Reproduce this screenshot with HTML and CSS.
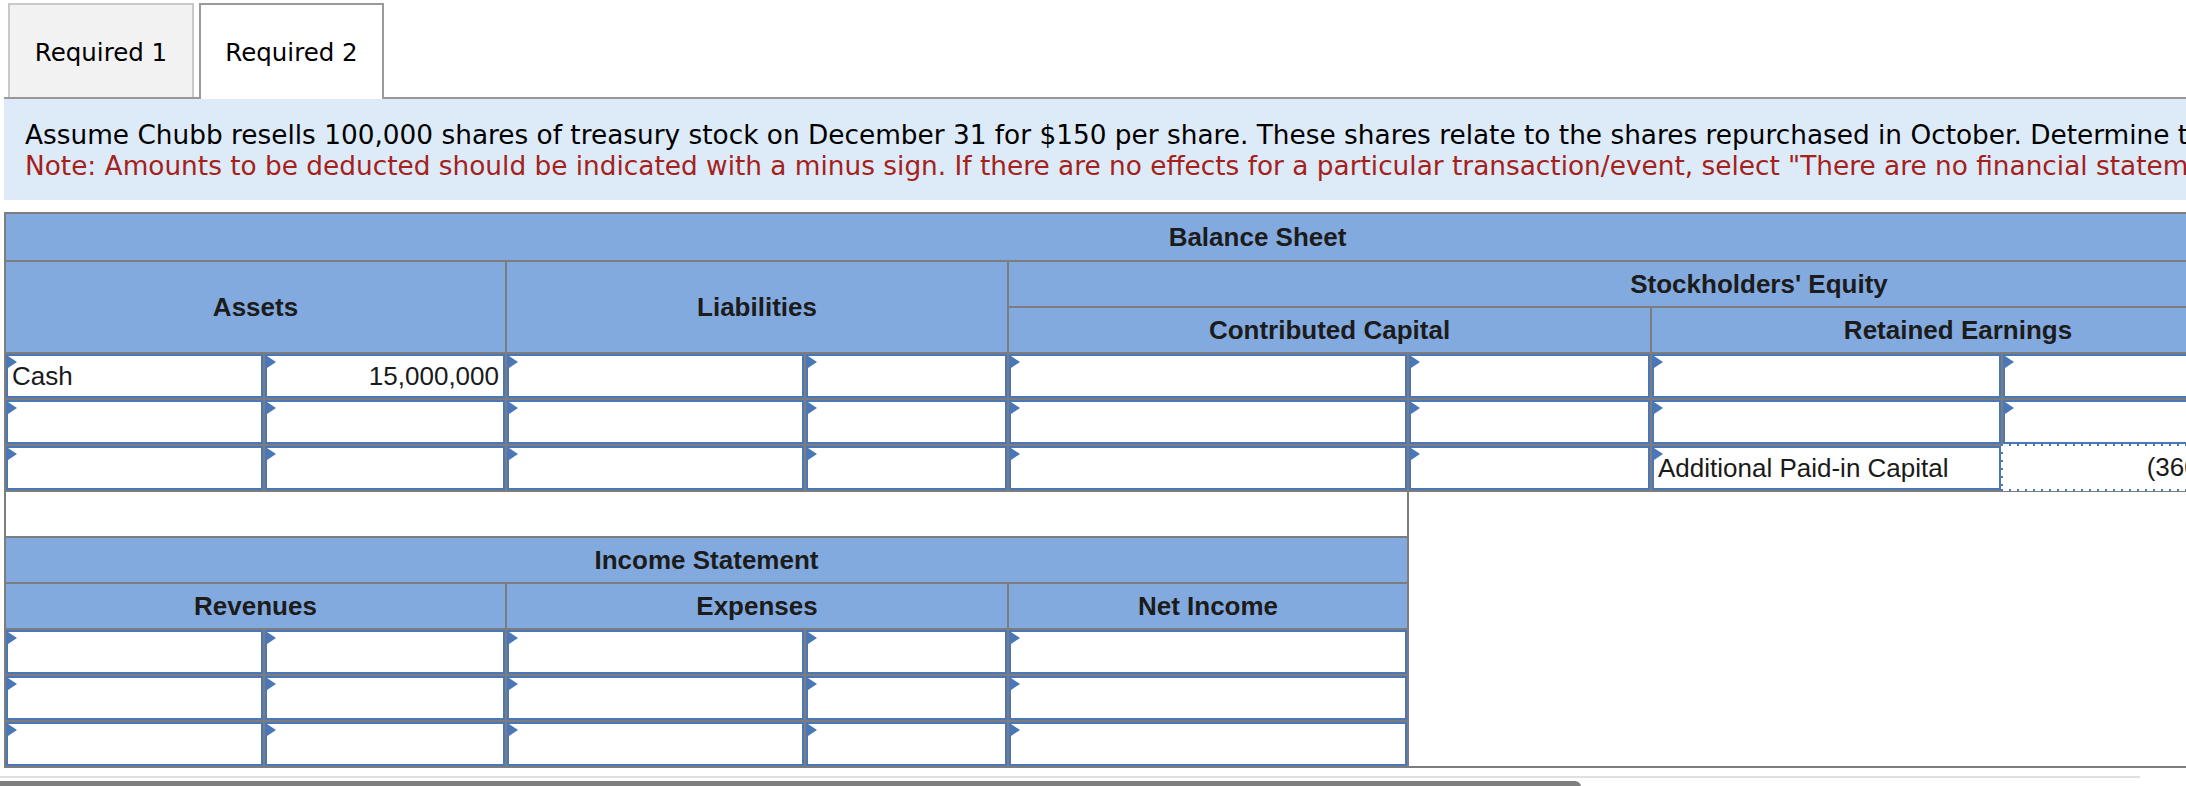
FILE: index.html
```html
<!DOCTYPE html>
<html>
<head>
<meta charset="utf-8">
<link rel="stylesheet" href="styles.css">
</head>
<body>
<div class="page">
  <div class="tabs">
    <div class="tab">Required 1</div>
    <div class="tab active">Required 2</div>
  </div>
  <div class="prompt">
    <p class="q">Assume Chubb resells 100,000 shares of treasury stock on December 31 for $150 per share. These shares relate to the shares repurchased in October. Determine the financial statement effects of the resale of treasury stock.</p>
    <p class="note">Note: Amounts to be deducted should be indicated with a minus sign. If there are no effects for a particular transaction/event, select "There are no financial statement effects" from the drop-down list.</p>
  </div>
  <div class="scroller">
    <div class="fx">
      <div class="h span9">Balance Sheet</div>
      <div class="h span2 rows2">Assets</div>
      <div class="h span2 rows2">Liabilities</div>
      <div class="h span5">Stockholders' Equity</div>
      <div class="h span2">Contributed Capital</div>
      <div class="h span2">Retained Earnings</div>
      <div class="h"></div>

      <div class="c"><div class="in">Cash</div></div>
      <div class="c"><div class="in num">15,000,000</div></div>
      <div class="c"><div class="in"></div></div>
      <div class="c"><div class="in"></div></div>
      <div class="c"><div class="in"></div></div>
      <div class="c"><div class="in"></div></div>
      <div class="c"><div class="in"></div></div>
      <div class="c"><div class="in"></div></div>
      <div class="c"><div class="in"></div></div>

      <div class="c"><div class="in"></div></div>
      <div class="c"><div class="in"></div></div>
      <div class="c"><div class="in"></div></div>
      <div class="c"><div class="in"></div></div>
      <div class="c"><div class="in"></div></div>
      <div class="c"><div class="in"></div></div>
      <div class="c"><div class="in"></div></div>
      <div class="c"><div class="in"></div></div>
      <div class="c"><div class="in"></div></div>

      <div class="c"><div class="in"></div></div>
      <div class="c"><div class="in"></div></div>
      <div class="c"><div class="in"></div></div>
      <div class="c"><div class="in"></div></div>
      <div class="c"><div class="in"></div></div>
      <div class="c"><div class="in"></div></div>
      <div class="c"><div class="in">Additional Paid-in Capital</div></div>
      <div class="c"><div class="dotted">(360,000)</div></div>
      <div class="c"><div class="in"></div></div>

      <div class="c span5"></div>
      <div class="c span4 rows6"></div>
      <div class="h span5">Income Statement</div>
      <div class="h span2">Revenues</div>
      <div class="h span2">Expenses</div>
      <div class="h">Net Income</div>

      <div class="c"><div class="in"></div></div>
      <div class="c"><div class="in"></div></div>
      <div class="c"><div class="in"></div></div>
      <div class="c"><div class="in"></div></div>
      <div class="c"><div class="in"></div></div>

      <div class="c"><div class="in"></div></div>
      <div class="c"><div class="in"></div></div>
      <div class="c"><div class="in"></div></div>
      <div class="c"><div class="in"></div></div>
      <div class="c"><div class="in"></div></div>

      <div class="c"><div class="in"></div></div>
      <div class="c"><div class="in"></div></div>
      <div class="c"><div class="in"></div></div>
      <div class="c"><div class="in"></div></div>
      <div class="c"><div class="in"></div></div>
    </div>
  </div>
  <div class="hscroll">
    <div class="track"></div>
    <div class="thumb"></div>
  </div>
</div>
</body>
</html>
```

FILE: styles.css
```css
html, body {
  margin: 0;
  padding: 0;
  background: #fff;
  overflow: hidden;
}

.page {
  width: 2186px;
  height: 786px;
  overflow: hidden;
}

.tabs {
  display: flex;
  gap: 5px;
  margin-left: 4px;
  padding-top: 3px;
  padding-left: 4px;
  border-bottom: 2px solid #999;
  height: 94px;
}

.tab {
  box-sizing: border-box;
  width: 186px;
  height: 94px;
  border: 2px solid #c9c9c9;
  border-bottom: none;
  background: #f2f2f2;
  display: flex;
  align-items: center;
  justify-content: center;
  padding-top: 2px;
  font-family: "DejaVu Sans", Verdana, sans-serif;
  font-size: 24.5px;
  color: #000;
}

.tab.active {
  width: 185px;
  height: 96px;
  margin-bottom: -2px;
  padding-bottom: 2px;
  border-color: #9a9a9a;
  background: #fff;
}

.prompt {
  margin-left: 4px;
  background: #ddeaf7;
  height: 101px;
  box-sizing: border-box;
  padding: 21px 0 0 21px;
  white-space: nowrap;
  overflow: hidden;
  font-family: "DejaVu Sans", Verdana, sans-serif;
  font-size: 26.35px;
  line-height: 31px;
}

.prompt p {
  margin: 0;
}

.q {
  color: #000;
}

.note {
  color: #a4211c;
}

.scroller {
  margin-top: 12px;
  margin-left: 4px;
  overflow: hidden;
}

.fx {
  display: inline-grid;
  grid-template-columns: 257px 240px 297px 201px 398px 241px 349px 261px 243px;
  grid-template-rows: 46px repeat(11, 44px);
  gap: 2px;
  padding: 2px;
  background: #7d7d7d;
  font-family: "Liberation Sans", Arial, sans-serif;
}

.h {
  background: #83aadf;
  color: #1c1c1c;
  font-weight: bold;
  font-size: 26px;
  display: flex;
  align-items: center;
  justify-content: center;
  white-space: nowrap;
}

.c {
  background: #fff;
  min-width: 0;
}

.span2 { grid-column: span 2; }
.span4 { grid-column: span 4; }
.span5 { grid-column: span 5; }
.span9 { grid-column: span 9; }
.rows2 { grid-row: span 2; }
.rows6 { grid-row: span 6; }

.in {
  position: relative;
  box-sizing: border-box;
  height: 100%;
  border: 2px solid #4a77b8;
  background: #fff;
  display: flex;
  align-items: center;
  padding: 0 4px;
  font-size: 26px;
  color: #1a1a1a;
  white-space: nowrap;
  overflow: hidden;
}

.in::before {
  content: "";
  position: absolute;
  left: 0;
  top: 0;
  width: 9px;
  height: 12px;
  background: #4a77b8;
  clip-path: polygon(0 0, 100% 50%, 0 100%);
}

.in.num {
  justify-content: flex-end;
}

.dotted {
  box-sizing: border-box;
  height: 47px;
  margin: -2px 0 0 -2px;
  display: flex;
  align-items: center;
  justify-content: flex-end;
  padding: 0 6px 0 0;
  font-size: 26px;
  color: #1a1a1a;
  white-space: nowrap;
  background:
    linear-gradient(to right, #4a77b8 2px, transparent 2px) left top / 8px 2px repeat-x,
    linear-gradient(to right, #4a77b8 2px, transparent 2px) left bottom / 8px 2px repeat-x,
    linear-gradient(to bottom, #4a77b8 2px, transparent 2px) left top / 2px 8px repeat-y,
    linear-gradient(to bottom, #4a77b8 2px, transparent 2px) right top / 2px 8px repeat-y,
    #fff;
}

.hscroll {
  margin-top: 8px;
  position: relative;
  height: 10px;
}

.track {
  width: 2140px;
  height: 2px;
  background: #e0e0e0;
}

.thumb {
  margin-top: 3px;
  width: 1581px;
  height: 12px;
  border-radius: 0 6px 6px 0;
  background: #7f7f7f;
}
```
